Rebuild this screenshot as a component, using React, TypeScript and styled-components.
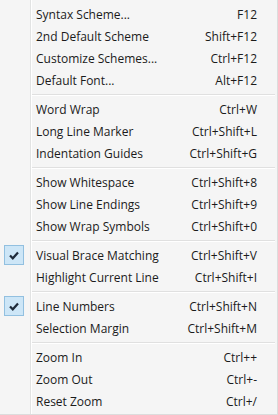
import React from "react";
import styled, { createGlobalStyle } from "styled-components";

const Global = createGlobalStyle`
  html, body { margin: 0; padding: 0; background: #f0f0f0; }
  body { font-family: "Open Sans", "Noto Sans", sans-serif; }
`;

const Menu = styled.div`
  width: 278px;
  height: 415px;
  box-sizing: border-box;
  background: #f5f5f5;
  border-right: 1px solid #dcdcdc;
  border-bottom: 1px solid #dcdcdc;
  padding: 3px 0 2px 0;
  position: relative;
  display: flex;
  flex-direction: column;
`;

const Gutter = styled.div`
  position: absolute;
  top: 0;
  bottom: 0;
  left: 30px;
  width: 1px;
  background: #e2e3e3;
  border-right: 1px solid #ffffff;
`;

const Row = styled.div`
  height: 22px;
  display: flex;
  align-items: center;
  padding: 0 20px 0 3px;
  font-size: 12px;
  color: #1b1b1b;
  position: relative;
`;

const CheckCell = styled.div<{ $on?: boolean }>`
  width: 20px;
  height: 20px;
  margin-right: 12px;
  box-sizing: border-box;
  display: flex;
  align-items: center;
  justify-content: center;
  background: ${(p) => (p.$on ? "#cde6f7" : "transparent")};
  border: 1px solid ${(p) => (p.$on ? "#92c0e0" : "transparent")};
  margin-left: 1px;
`;

const Label = styled.span`
  flex: 1;
  white-space: nowrap;
`;

const Shortcut = styled.span`
  white-space: nowrap;
  text-align: right;
`;

const Sep = styled.div`
  height: 7px;
  display: flex;
  align-items: center;
  padding-left: 32px;
  padding-right: 2px;
  &::after {
    content: "";
    flex: 1;
    height: 1px;
    background: #e0e0e0;
    border-bottom: 1px solid #ffffff;
  }
`;

type Item = { label: string; key: string; checked?: boolean } | "sep";

const items: Item[] = [
  { label: "Syntax Scheme...", key: "F12" },
  { label: "2nd Default Scheme", key: "Shift+F12" },
  { label: "Customize Schemes...", key: "Ctrl+F12" },
  { label: "Default Font...", key: "Alt+F12" },
  "sep",
  { label: "Word Wrap", key: "Ctrl+W" },
  { label: "Long Line Marker", key: "Ctrl+Shift+L" },
  { label: "Indentation Guides", key: "Ctrl+Shift+G" },
  "sep",
  { label: "Show Whitespace", key: "Ctrl+Shift+8" },
  { label: "Show Line Endings", key: "Ctrl+Shift+9" },
  { label: "Show Wrap Symbols", key: "Ctrl+Shift+0" },
  "sep",
  { label: "Visual Brace Matching", key: "Ctrl+Shift+V", checked: true },
  { label: "Highlight Current Line", key: "Ctrl+Shift+I" },
  "sep",
  { label: "Line Numbers", key: "Ctrl+Shift+N", checked: true },
  { label: "Selection Margin", key: "Ctrl+Shift+M" },
  "sep",
  { label: "Zoom In", key: "Ctrl++" },
  { label: "Zoom Out", key: "Ctrl+-" },
  { label: "Reset Zoom", key: "Ctrl+/" },
];

const Check = () => (
  <svg width="10" height="9" viewBox="0 0 10 9">
    <path d="M1 4.5 L3.8 7.3 L9 1.5" fill="none" stroke="#1e2a3a" strokeWidth="2.2" />
  </svg>
);

export default function App() {
  return (
    <>
      <Global />
      <Menu>
        <Gutter />
        {items.map((it, i) =>
          it === "sep" ? (
            <Sep key={i} />
          ) : (
            <Row key={i}>
              <CheckCell $on={it.checked}>{it.checked && <Check />}</CheckCell>
              <Label>{it.label}</Label>
              <Shortcut>{it.key}</Shortcut>
            </Row>
          )
        )}
      </Menu>
    </>
  );
}
